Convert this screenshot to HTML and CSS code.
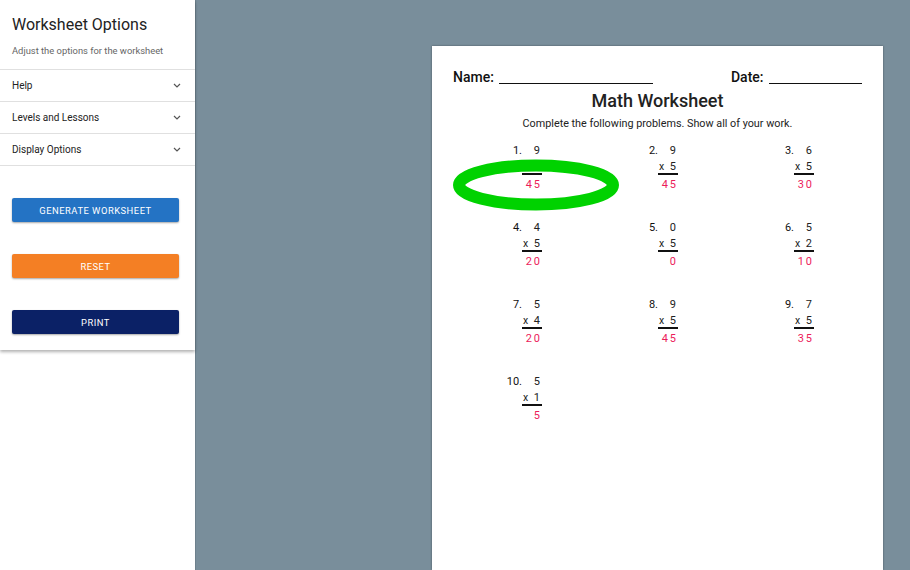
FILE: index.html
```html
<!DOCTYPE html>
<html lang="en">
<head>
  <meta charset="UTF-8" />
  <title>Math Worksheet</title>
  <link rel="stylesheet" href="styles.css">
</head>
<body>
  <div class="sidebar">
    <div class="panel">
      <div class="panel-head">
        <h1>Worksheet Options</h1>
        <p>Adjust the options for the worksheet</p>
      </div>

      <div class="row">Help
        <svg class="chev" viewBox="0 0 8 5"><polyline points="1,1 4,4 7,1" /></svg>
      </div>
      <div class="row">Levels and Lessons
        <svg class="chev" viewBox="0 0 8 5"><polyline points="1,1 4,4 7,1" /></svg>
      </div>
      <div class="row">Display Options
        <svg class="chev" viewBox="0 0 8 5"><polyline points="1,1 4,4 7,1" /></svg>
      </div>

      <div class="actions">
        <button class="btn generate">Generate Worksheet</button>
        <button class="btn reset">Reset</button>
        <button class="btn print">Print</button>
      </div>
    </div>
  </div>

  <div class="main">
    <div class="paper">
      <div class="fields">
        <div>Name: <span class="blank name-blank"></span></div>
        <div>Date: <span class="blank date-blank"></span></div>
      </div>
      <h2>Math Worksheet</h2>
      <p class="instructions">Complete the following problems. Show all of your work.</p>

      <div class="problems">
        <div class="prob"><span class="num">1.</span><span class="top">9</span><span class="op"><i>x</i>5</span><span class="ans">45</span></div>
        <div class="prob"><span class="num">2.</span><span class="top">9</span><span class="op"><i>x</i>5</span><span class="ans">45</span></div>
        <div class="prob"><span class="num">3.</span><span class="top">6</span><span class="op"><i>x</i>5</span><span class="ans">30</span></div>
        <div class="prob"><span class="num">4.</span><span class="top">4</span><span class="op"><i>x</i>5</span><span class="ans">20</span></div>
        <div class="prob"><span class="num">5.</span><span class="top">0</span><span class="op"><i>x</i>5</span><span class="ans">0</span></div>
        <div class="prob"><span class="num">6.</span><span class="top">5</span><span class="op"><i>x</i>2</span><span class="ans">10</span></div>
        <div class="prob"><span class="num">7.</span><span class="top">5</span><span class="op"><i>x</i>4</span><span class="ans">20</span></div>
        <div class="prob"><span class="num">8.</span><span class="top">9</span><span class="op"><i>x</i>5</span><span class="ans">45</span></div>
        <div class="prob"><span class="num">9.</span><span class="top">7</span><span class="op"><i>x</i>5</span><span class="ans">35</span></div>
        <div class="prob"><span class="num">10.</span><span class="top">5</span><span class="op"><i>x</i>1</span><span class="ans">5</span></div>
      </div>

      <svg class="circle" viewBox="0 0 166 52">
        <ellipse cx="83" cy="26" rx="77" ry="19.5" />
      </svg>
    </div>
  </div>
</body>
</html>
```

FILE: styles.css
```css
* {
  box-sizing: border-box;
}
body {
  margin: 0;
  height: 570px;
  overflow: hidden;
  display: flex;
  font-family: Roboto, 'Liberation Sans', sans-serif;
  color: #222;
  background: #798e9b;
}

.sidebar {
  width: 196px;
  flex-shrink: 0;
  background: #fff;
  border-right: 1px solid #6d808c;
}

.panel {
  background: #fff;
  box-shadow: 0 2px 3px rgba(0, 0, 0, 0.3);
  padding-bottom: 16px;
}

.panel-head {
  padding: 14px 12px 11px;
  border-bottom: 1px solid #e0e0e0;
}
.panel-head h1 {
  margin: 0;
  font-size: 16px;
  font-weight: 400;
  line-height: 22px;
}
.panel-head p {
  margin: 8px 0 0;
  font-size: 9.4px;
  line-height: 14px;
  color: #666;
}

.row {
  height: 32px;
  display: flex;
  align-items: center;
  justify-content: space-between;
  padding: 0 14px 0 12px;
  font-size: 10px;
  border-bottom: 1px solid #e0e0e0;
}
.chev {
  width: 8px;
  height: 5px;
  fill: none;
  stroke: #555;
  stroke-width: 1.2;
}

.actions {
  display: flex;
  flex-direction: column;
  gap: 32px;
  padding: 32px 16px 0 12px;
}

.btn {
  height: 24px;
  border: none;
  border-radius: 2px;
  color: #fff;
  font-family: Roboto, 'Liberation Sans', sans-serif;
  font-size: 9.4px;
  letter-spacing: 0.5px;
  text-transform: uppercase;
  box-shadow: 0 1px 2px rgba(0, 0, 0, 0.35);
}
.generate { background: #2473c4; }
.reset { background: #f47f24; }
.print { background: #0b2166; }

.main {
  flex: 1;
  padding: 46px 0 0 236px;
}

.paper {
  position: relative;
  width: 451px;
  height: 524px;
  background: #fff;
  box-shadow: 0 0 2px rgba(0, 0, 0, 0.4);
  padding: 21px 21px 0;
}

.fields {
  display: flex;
  justify-content: space-between;
  font-size: 14px;
  font-weight: 500;
  line-height: 20px;
  color: #111;
}
.blank {
  display: inline-block;
  border-bottom: 1.5px solid #111;
  margin-left: 2px;
  vertical-align: -2px;
}
.name-blank { width: 154px; }
.date-blank { width: 93px; }

.paper h2 {
  margin: 2px 0 0;
  text-align: center;
  font-size: 18px;
  font-weight: 500;
  line-height: 24px;
}
.instructions {
  margin: 4px 0 0;
  text-align: center;
  font-size: 10.8px;
  line-height: 14px;
}

.problems {
  display: grid;
  grid-template-columns: repeat(3, 136px);
  row-gap: 28px;
  margin: 11px 0 0 47px;
  font-size: 11px;
}

.prob {
  display: grid;
  grid-template-columns: 22px 20px;
  grid-template-rows: 17px 16px 16px;
  align-items: center;
}
.num {
  text-align: right;
  color: #111;
}
.top {
  text-align: right;
  padding-right: 2px;
}
.op {
  grid-column: 2;
  display: flex;
  justify-content: space-between;
  align-items: center;
  padding: 0 2px 0 1px;
  height: 16px;
  border-bottom: 2px solid #111;
}
.op i {
  font-style: normal;
  font-size: 10.5px;
}
.ans {
  grid-column: 2;
  text-align: right;
  color: #ec1c5b;
  letter-spacing: 2px;
  padding-top: 2px;
}

.circle {
  position: absolute;
  left: 21px;
  top: 113px;
  width: 166px;
  height: 52px;
  fill: none;
  stroke: #00d200;
  stroke-width: 12;
}
```
